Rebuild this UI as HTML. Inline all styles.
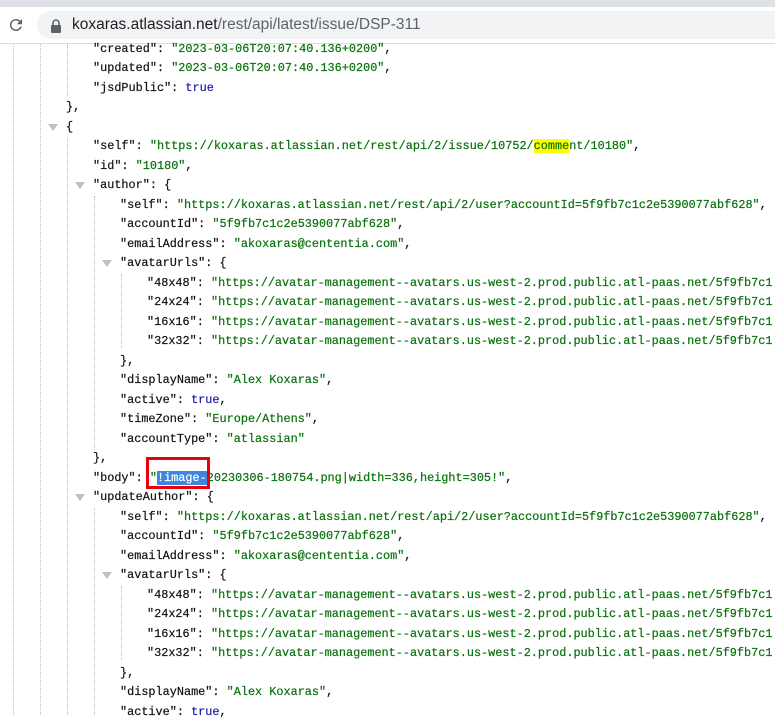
<!DOCTYPE html><html><head><style>
body{margin:0;width:775px;height:715px;overflow:hidden;background:#fff;position:relative;font-family:"Liberation Mono",monospace;}
.top{position:absolute;left:0;top:0;width:775px;height:7px;background:#dee1e6}
.bar{position:absolute;left:0;top:7px;width:775px;height:36px;background:#fff;border-bottom:1px solid #dadce0}
.pill{position:absolute;left:37px;top:4px;width:760px;height:28px;border-radius:14px;background:#f1f3f4}
.url{position:absolute;left:72px;top:9px;font:15.5px "Liberation Sans",sans-serif;color:#202124}
.url span{color:#5f6368}
.g{position:absolute;width:0;border-left:1px dotted #bbb}
.l{position:absolute;height:19.5px;line-height:19.5px;font-size:11.85px;white-space:pre;color:#111;-webkit-text-stroke:0.2px currentColor}
.s{color:#08700c}.b{color:#1a1aa6}
.t{position:absolute;width:0;height:0;border-left:5px solid transparent;border-right:5px solid transparent;border-top:7px solid #c0c0c0}
</style></head><body>
<div class="top"></div>
<div class="bar"><div class="pill"></div>
<svg style="position:absolute;left:7px;top:9px" width="18" height="18" viewBox="0 0 24 24"><path d="M17.6 6.4A8 8 0 1 0 19.7 14h-2.1a6 6 0 1 1-1.4-6.2L13 11h7V4z" fill="#5f6368"/></svg>
<svg style="position:absolute;left:50px;top:12px" width="12" height="14" viewBox="0 0 12 14"><rect x="1" y="6" width="10" height="8" rx="1" fill="#5f6368"/><path d="M3 6V4a3 3 0 0 1 6 0v2" stroke="#5f6368" stroke-width="1.6" fill="none"/></svg>
<div class="url">koxaras.atlassian.net<span>/rest/api/latest/issue/DSP-311</span></div></div>
<div class="g" style="left:13px;top:44px;height:671px"></div>
<div class="g" style="left:40px;top:44px;height:671px"></div>
<div class="g" style="left:67px;top:44px;height:52px"></div>
<div class="g" style="left:67px;top:138px;height:577px"></div>
<div class="g" style="left:94px;top:196px;height:254px"></div>
<div class="g" style="left:121px;top:274px;height:74px"></div>
<div class="g" style="left:94px;top:508px;height:207px"></div>
<div class="g" style="left:121px;top:586px;height:74px"></div>
<div class="t" style="left:48px;top:124px"></div>
<div class="t" style="left:75px;top:182px"></div>
<div class="t" style="left:102px;top:260px"></div>
<div class="t" style="left:75px;top:494px"></div>
<div class="t" style="left:102px;top:572px"></div>
<div class="l" style="left:93px;top:39.5px">"created": <span class="s">"2023-03-06T20:07:40.136+0200"</span>,</div>
<div class="l" style="left:93px;top:59px">"updated": <span class="s">"2023-03-06T20:07:40.136+0200"</span>,</div>
<div class="l" style="left:93px;top:78.5px">"jsdPublic": <span class="b">true</span></div>
<div class="l" style="left:66px;top:98px">},</div>
<div class="l" style="left:66px;top:117.5px">{</div>
<div class="l" style="left:93px;top:137px">"self": <span class="s">"https://koxaras.atlassian.net/rest/api/2/issue/10752/<span style="background:#ffff00">comme</span>nt/10180"</span>,</div>
<div class="l" style="left:93px;top:156.5px">"id": <span class="s">"10180"</span>,</div>
<div class="l" style="left:93px;top:176px">"author": {</div>
<div class="l" style="left:120px;top:195.5px">"self": <span class="s">"https://koxaras.atlassian.net/rest/api/2/user?accountId=5f9fb7c1c2e5390077abf628"</span>,</div>
<div class="l" style="left:120px;top:215px">"accountId": <span class="s">"5f9fb7c1c2e5390077abf628"</span>,</div>
<div class="l" style="left:120px;top:234.5px">"emailAddress": <span class="s">"akoxaras@cententia.com"</span>,</div>
<div class="l" style="left:120px;top:254px">"avatarUrls": {</div>
<div class="l" style="left:147px;top:273.5px">"48x48": <span class="s">"https://avatar-management--avatars.us-west-2.prod.public.atl-paas.net/5f9fb7c1</span></div>
<div class="l" style="left:147px;top:293px">"24x24": <span class="s">"https://avatar-management--avatars.us-west-2.prod.public.atl-paas.net/5f9fb7c1</span></div>
<div class="l" style="left:147px;top:312.5px">"16x16": <span class="s">"https://avatar-management--avatars.us-west-2.prod.public.atl-paas.net/5f9fb7c1</span></div>
<div class="l" style="left:147px;top:332px">"32x32": <span class="s">"https://avatar-management--avatars.us-west-2.prod.public.atl-paas.net/5f9fb7c1</span></div>
<div class="l" style="left:120px;top:351.5px">},</div>
<div class="l" style="left:120px;top:371px">"displayName": <span class="s">"Alex Koxaras"</span>,</div>
<div class="l" style="left:120px;top:390.5px">"active": <span class="b">true</span>,</div>
<div class="l" style="left:120px;top:410px">"timeZone": <span class="s">"Europe/Athens"</span>,</div>
<div class="l" style="left:120px;top:429.5px">"accountType": <span class="s">"atlassian"</span></div>
<div class="l" style="left:93px;top:449px">},</div>
<div class="l" style="left:93px;top:468.5px">"body": <span class="s">"<span style="background:#3d86e0;color:#fff">!image-</span>20230306-180754.png|width=336,height=305!"</span>,</div>
<div style="position:absolute;left:146px;top:457px;width:64px;height:32px;border:3px solid #e8000b;box-sizing:border-box"></div>
<div class="l" style="left:93px;top:488px">"updateAuthor": {</div>
<div class="l" style="left:120px;top:507.5px">"self": <span class="s">"https://koxaras.atlassian.net/rest/api/2/user?accountId=5f9fb7c1c2e5390077abf628"</span>,</div>
<div class="l" style="left:120px;top:527px">"accountId": <span class="s">"5f9fb7c1c2e5390077abf628"</span>,</div>
<div class="l" style="left:120px;top:546.5px">"emailAddress": <span class="s">"akoxaras@cententia.com"</span>,</div>
<div class="l" style="left:120px;top:566px">"avatarUrls": {</div>
<div class="l" style="left:147px;top:585.5px">"48x48": <span class="s">"https://avatar-management--avatars.us-west-2.prod.public.atl-paas.net/5f9fb7c1</span></div>
<div class="l" style="left:147px;top:605px">"24x24": <span class="s">"https://avatar-management--avatars.us-west-2.prod.public.atl-paas.net/5f9fb7c1</span></div>
<div class="l" style="left:147px;top:624.5px">"16x16": <span class="s">"https://avatar-management--avatars.us-west-2.prod.public.atl-paas.net/5f9fb7c1</span></div>
<div class="l" style="left:147px;top:644px">"32x32": <span class="s">"https://avatar-management--avatars.us-west-2.prod.public.atl-paas.net/5f9fb7c1</span></div>
<div class="l" style="left:120px;top:663.5px">},</div>
<div class="l" style="left:120px;top:683px">"displayName": <span class="s">"Alex Koxaras"</span>,</div>
<div class="l" style="left:120px;top:702.5px">"active": <span class="b">true</span>,</div>
</body></html>
